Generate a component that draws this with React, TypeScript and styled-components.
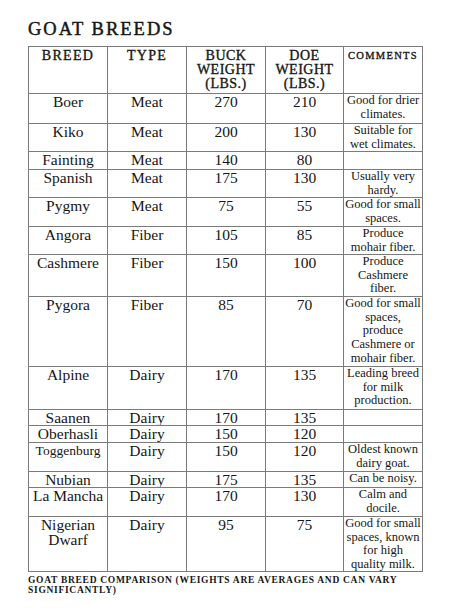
import React from 'react'
import styled, { createGlobalStyle } from 'styled-components'

const LINE = '#7b7b7b'
const INK = '#161616'

const GlobalStyle = createGlobalStyle`
  html, body {
    margin: 0;
    padding: 0;
    background: #fff;
  }
  body {
    font-family: 'Liberation Serif', 'Times New Roman', serif;
    color: ${INK};
  }
`

type Breed = {
  name: string[]
  kind: string
  buck: number
  doe: number
  notes: string[]
  h: number
  small?: boolean
}

const breeds: Breed[] = [
  { name: ['Boer'], kind: 'Meat', buck: 270, doe: 210, notes: ['Good for drier', 'climates.'], h: 30 },
  { name: ['Kiko'], kind: 'Meat', buck: 200, doe: 130, notes: ['Suitable for', 'wet climates.'], h: 28 },
  { name: ['Fainting'], kind: 'Meat', buck: 140, doe: 80, notes: [], h: 18 },
  { name: ['Spanish'], kind: 'Meat', buck: 175, doe: 130, notes: ['Usually very', 'hardy.'], h: 28 },
  { name: ['Pygmy'], kind: 'Meat', buck: 75, doe: 55, notes: ['Good for small', 'spaces.'], h: 29 },
  { name: ['Angora'], kind: 'Fiber', buck: 105, doe: 85, notes: ['Produce', 'mohair fiber.'], h: 28 },
  { name: ['Cashmere'], kind: 'Fiber', buck: 150, doe: 100, notes: ['Produce', 'Cashmere', 'fiber.'], h: 42 },
  {
    name: ['Pygora'],
    kind: 'Fiber',
    buck: 85,
    doe: 70,
    notes: ['Good for small', 'spaces,', 'produce', 'Cashmere or', 'mohair fiber.'],
    h: 70,
  },
  { name: ['Alpine'], kind: 'Dairy', buck: 170, doe: 135, notes: ['Leading breed', 'for milk', 'production.'], h: 43 },
  { name: ['Saanen'], kind: 'Dairy', buck: 170, doe: 135, notes: [], h: 16 },
  { name: ['Oberhasli'], kind: 'Dairy', buck: 150, doe: 120, notes: [], h: 17 },
  {
    name: ['Toggenburg'],
    kind: 'Dairy',
    buck: 150,
    doe: 120,
    notes: ['Oldest known', 'dairy goat.'],
    h: 29,
    small: true,
  },
  { name: ['Nubian'], kind: 'Dairy', buck: 175, doe: 135, notes: ['Can be noisy.'], h: 16 },
  { name: ['La Mancha'], kind: 'Dairy', buck: 170, doe: 130, notes: ['Calm and', 'docile.'], h: 29 },
  {
    name: ['Nigerian', 'Dwarf'],
    kind: 'Dairy',
    buck: 95,
    doe: 75,
    notes: ['Good for small', 'spaces, known', 'for high', 'quality milk.'],
    h: 55,
  },
]

const Page = styled.div`
  width: 474px;
  height: 613px;
  box-sizing: border-box;
  padding: 19px 0 0 28px;
`

const Title = styled.h1`
  margin: 0 0 7px;
  font-size: 18.5px;
  line-height: 20px;
  font-weight: 400;
  letter-spacing: 2px;
  -webkit-text-stroke: 0.45px ${INK};
`

const Table = styled.div`
  width: 395px;
  box-sizing: border-box;
  display: flex;
  flex-direction: column;
  border-top: 1px solid ${LINE};
  border-left: 1px solid ${LINE};
`

const Row = styled.div<{ $h: number }>`
  display: grid;
  grid-template-columns: 79px 79px 79px 78px 79px;
  height: ${(p) => p.$h}px;
`

const Cell = styled.div`
  box-sizing: border-box;
  border-right: 1px solid ${LINE};
  border-bottom: 1px solid ${LINE};
  overflow: hidden;
  text-align: center;
  font-size: 15.5px;
  line-height: 16px;
`

const Head = styled(Cell)<{ $size?: number; $ls?: number }>`
  padding-top: 1.5px;
  font-size: ${(p) => p.$size ?? 14}px;
  letter-spacing: ${(p) => p.$ls ?? 1.3}px;
  line-height: 14px;
  -webkit-text-stroke: 0.35px ${INK};
`

const NameCell = styled(Cell)<{ $small?: boolean; $lines: number }>`
  font-size: ${(p) => (p.$small ? 13.5 : 15.5)}px;
  line-height: ${(p) => (p.$lines > 1 ? 15 : 16)}px;
`

const Notes = styled(Cell)`
  font-size: 12.5px;
  line-height: 13.7px;
`

const Line = styled.span`
  display: block;
  white-space: nowrap;
`

const Caption = styled.p`
  margin: 4px 0 0;
  width: 395px;
  font-size: 9.5px;
  line-height: 9.5px;
  font-weight: 700;
  letter-spacing: 0.7px;
`

const Lines = ({ items }: { items: string[] }) => (
  <>
    {items.map((t) => (
      <Line key={t}>{t}</Line>
    ))}
  </>
)

export default function App() {
  return (
    <Page>
      <GlobalStyle />
      <Title>GOAT BREEDS</Title>
      <Table>
        <Row $h={47}>
          <Head>BREED</Head>
          <Head>TYPE</Head>
          <Head $ls={0.5}>
            <Lines items={['BUCK', 'WEIGHT', '(LBS.)']} />
          </Head>
          <Head $ls={0.5}>
            <Lines items={['DOE', 'WEIGHT', '(LBS.)']} />
          </Head>
          <Head $size={10.5} $ls={1.3}>
            COMMENTS
          </Head>
        </Row>
        {breeds.map((b) => (
          <Row key={b.name.join(' ')} $h={b.h}>
            <NameCell $small={b.small} $lines={b.name.length}>
              <Lines items={b.name} />
            </NameCell>
            <Cell>{b.kind}</Cell>
            <Cell>{b.buck}</Cell>
            <Cell>{b.doe}</Cell>
            <Notes>
              <Lines items={b.notes} />
            </Notes>
          </Row>
        ))}
      </Table>
      <Caption>GOAT BREED COMPARISON (WEIGHTS ARE AVERAGES AND CAN VARY SIGNIFICANTLY)</Caption>
    </Page>
  )
}
